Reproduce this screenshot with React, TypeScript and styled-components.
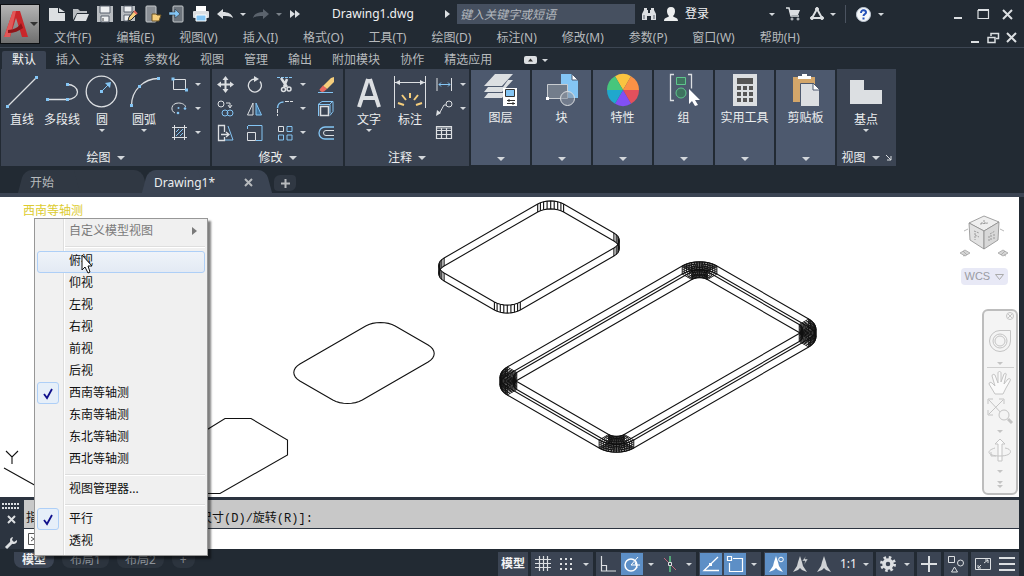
import React from "react";
import styled, { createGlobalStyle, css } from "styled-components";

const LIGHT = "#dcdfe2";
const BLUE = "#84c5f4";
const YELLOW = "#f5ce7c";

const GlobalStyle = createGlobalStyle`
  * { box-sizing: border-box; }
  body {
    margin: 0;
    background: #222a33;
    color: ${LIGHT};
    font: 12px/18px "Noto Sans", "Noto Sans CJK SC", sans-serif;
    overflow: hidden;
  }
  button, input { font: inherit; color: inherit; }
  button { border: 0; padding: 0; background: none; white-space: nowrap; }
  svg { display: block; flex: none; overflow: visible; }
`;

/* ---------- shared parts ---------- */

const Shell = styled.div`
  display: flex;
  flex-direction: column;
  min-height: 100vh;
`;

const Spacer = styled.div`
  flex: 1;
`;

const Caret = styled.span<{ $size?: number; $color?: string }>`
  flex: none;
  width: 0;
  height: 0;
  border: ${(p) => p.$size ?? 3}px solid transparent;
  border-bottom-width: 0;
  border-top-color: ${(p) => p.$color ?? "#d3d7db"};
`;

const IconButton = styled.button<{ $w?: number }>`
  display: flex;
  flex: none;
  align-items: center;
  justify-content: center;
  width: ${(p) => p.$w ?? 24}px;
  height: 24px;
`;

type DrawProps = { w: number; h?: number; children: React.ReactNode };
const Draw = ({ w, h = w, children }: DrawProps) => (
  <svg width={w} height={h} viewBox={`0 0 ${w} ${h}`} fill="none" stroke={LIGHT} aria-hidden="true">
    {children}
  </svg>
);

const Grip = ({ x, y }: { x: number; y: number }) => (
  <rect x={x - 1.5} y={y - 1.5} width="3" height="3" fill={BLUE} stroke="none" />
);

/* ---------- header ---------- */

const Header = styled.header`
  display: flex;
  height: 48px;
  border-bottom: 1px solid #3d4653;
`;

const AppButton = styled.button`
  display: flex;
  align-items: center;
  align-self: flex-start;
  width: 40px;
  height: 40px;
  margin-top: 4px;
  padding-left: 3px;
  gap: 2px;
  background: linear-gradient(#b4b4b4, #6f6f6f);
  border: 1px solid #0d1013;
`;

const HeaderRows = styled.div`
  flex: 1;
  display: flex;
  flex-direction: column;
`;

const TitleRow = styled.div`
  display: flex;
  align-items: center;
  height: 28px;
  padding: 0 5px;
`;

const FileName = styled.span`
  width: 84px;
  margin: 0 25px 0 27px;
  color: #f0f1f2;
`;

const Search = styled.input`
  width: 178px;
  height: 20px;
  margin-left: 4px;
  padding: 0 3px;
  border: 0;
  background: #465060;
  font-style: italic;
  &::placeholder { color: #b3b8be; opacity: 1; }
`;

const SignIn = styled.button`
  display: flex;
  align-items: center;
  gap: 6px;
  margin-right: 56px;
  color: #f0f1f2;
`;

const Rule = styled.span`
  width: 1px;
  height: 18px;
  margin: 0 5px 0 6px;
  background: #4b5360;
`;

const MenuRow = styled.nav`
  display: flex;
  align-items: center;
  height: 19px;
  padding: 0 4px 0 14px;
  gap: 25px;
  color: #b7babd;
`;

const WindowButtons = styled.div`
  display: flex;
`;

/* ---------- ribbon ---------- */

const RibbonTabs = styled.div`
  display: flex;
  align-items: center;
  height: 21px;
  padding: 3px 0 0 2px;
`;

const RibbonTab = styled.button<{ $active?: boolean }>`
  height: 18px;
  padding: 0 10px;
  color: #b7babd;
  ${(p) => p.$active && css`
    background: #3b4453;
    border-radius: 2px 2px 0 0;
    color: #f3f4f5;
  `}
`;

const Minimise = styled.button`
  display: flex;
  align-items: center;
  gap: 5px;
  margin-left: 22px;
`;

const Ribbon = styled.section`
  display: flex;
  gap: 2px;
  height: 97px;
  padding-left: 1px;
`;

const Panel = styled.div<{ $w: number }>`
  display: flex;
  flex-direction: column;
  flex: none;
  width: ${(p) => p.$w}px;
  background: #3b4453;
`;

const PanelBody = styled.div<{ $pad?: number }>`
  display: flex;
  flex: 1;
  padding: 3px 0 0 ${(p) => p.$pad ?? 0}px;
`;

const PanelTitle = styled.button`
  display: flex;
  align-items: center;
  justify-content: center;
  gap: 6px;
  height: 16px;
  color: #eceeef;
`;

const BigTool = styled.button<{ $w?: number }>`
  display: flex;
  flex-direction: column;
  align-items: center;
  align-self: flex-start;
  width: ${(p) => p.$w ?? 40}px;
  padding-top: 3px;
  color: #eceeef;
`;

const SmallTools = styled.div<{ $cols: string }>`
  display: grid;
  grid-template-columns: ${(p) => p.$cols};
  grid-auto-rows: 24px;
  align-content: start;
`;

const SmallTool = styled.button`
  display: flex;
  align-items: center;
  justify-content: flex-start;
  gap: 7px;
  padding-left: 5px;
`;

const FoldedPanel = styled.button`
  display: flex;
  flex-direction: column;
  align-items: center;
  flex: none;
  width: 59px;
  height: 95px;
  margin-top: 1px;
  padding: 4px 0;
  background: #4d596e;
  color: #eceeef;
  span:first-of-type { margin-top: 3px; flex: 1; }
`;

/* ---------- document tabs ---------- */

const DocTabs = styled.div`
  display: flex;
  align-items: flex-end;
  height: 31px;
  padding-left: 21px;
  border-bottom: 4px solid #3b4453;
`;

const slant = (color: string) => css`
  &::before, &::after {
    content: "";
    position: absolute;
    z-index: -1;
    inset: 0 50% 0 0;
    background: ${color};
    border-radius: 8px 0 0 0;
    transform: skewX(-15deg);
  }
  &::after {
    inset: 0 0 0 45%;
    border-radius: 0 8px 0 0;
    transform: skewX(15deg);
  }
`;

const DocTab = styled.div<{ $active?: boolean }>`
  position: relative;
  z-index: ${(p) => (p.$active ? 1 : 0)};
  display: flex;
  align-items: center;
  justify-content: space-between;
  width: 124px;
  height: 23px;
  padding: 2px 16px 0 9px;
  color: ${(p) => (p.$active ? "#eceeef" : "#b7babd")};
  ${(p) => slant(p.$active ? "#3b4453" : "#303843")}
`;

const NewTab = styled.button`
  display: flex;
  align-items: center;
  justify-content: center;
  width: 22px;
  height: 16px;
  margin: 0 0 2px 5px;
  background: #303843;
  border-radius: 6px 4px 6px 4px;
`;

/* ---------- model space ---------- */

const Canvas = styled.main`
  position: relative;
  flex: 1;
  min-height: 300px;
  margin-right: 5px;
  background: #fff;
  color: #000;
`;

const Model = styled.svg`
  position: absolute;
  inset: 0;
  width: 100%;
  height: 100%;
`;

const ViewLabel = styled.button`
  position: absolute;
  left: 23px;
  top: 5px;
  color: #dccb2e;
`;

const CubeBox = styled.div`
  position: absolute;
  top: 17px;
  right: 11px;
  display: flex;
  flex-direction: column;
  align-items: center;
  gap: 8px;
`;

const Wcs = styled.button`
  display: flex;
  align-items: center;
  justify-content: space-between;
  width: 47px;
  height: 17px;
  padding: 0 4px;
  border-radius: 4px;
  background: #e8e9f6;
  color: #9a9ba3;
  font: 11px/17px "Liberation Sans", "Noto Sans CJK SC", sans-serif;
`;

const NavBar = styled.div`
  position: absolute;
  top: 112px;
  right: 1px;
  display: flex;
  flex-direction: column;
  align-items: center;
  width: 36px;
  height: 186px;
  background: #f4f4f4;
  border: 2px solid #bdbdbd;
  border-radius: 6px;
`;

const NavTool = styled.button<{ $h: number }>`
  display: flex;
  align-items: center;
  justify-content: center;
  width: 32px;
  height: ${(p) => p.$h}px;
`;

const NavRule = styled.div`
  width: 27px;
  height: 1px;
  background: #cfcfcf;
`;

/* ---------- context menu ---------- */

const ViewMenu = styled.div`
  position: absolute;
  z-index: 5;
  left: 34px;
  top: 21px;
  width: 174px;
  padding: 2px;
  border: 1px solid #979797;
  background: linear-gradient(90deg, #f1f1f1 28px, #dedede 28px, #dedede 29px, #fff 29px, #fff 30px, #f0f0f0 30px);
  box-shadow: 3px 3px 2px rgba(0, 0, 0, 0.5);
`;

const MenuItem = styled.button<{ $hot?: boolean; $dim?: boolean }>`
  display: grid;
  grid-template-columns: 31px 1fr 12px;
  align-items: center;
  align-content: center;
  width: 100%;
  height: 22px;
  padding-bottom: 2px;
  text-align: left;
  border: 1px solid transparent;
  border-radius: 3px;
  color: ${(p) => (p.$dim ? "#7a7a7a" : "#111")};
  ${(p) => p.$hot && css`
    border-color: #aecff7;
    background: linear-gradient(#eff3f9, #e3eaf4);
  `}
`;

const Tick = styled.span<{ $on?: boolean }>`
  display: flex;
  align-items: center;
  justify-content: center;
  width: 22px;
  height: 22px;
  margin-left: -1px;
  ${(p) => p.$on && css`
    border: 1px solid #aecff7;
    border-radius: 3px;
    background: #e6eff9;
  `}
`;

const MenuRule = styled.div`
  height: 8px;
  margin-left: 28px;
  background: linear-gradient(transparent 3px, #dedede 3px, #dedede 4px, #fff 4px, #fff 5px, transparent 5px);
`;

const Pointer = styled.svg`
  position: absolute;
  z-index: 6;
  left: 81px;
  top: 57px;
`;

/* ---------- command line ---------- */

const Command = styled.section`
  display: flex;
  height: 52px;
  margin-right: 5px;
  padding-top: 3px;
  background: #2c3440;
  color: #111;
`;

const CommandGrip = styled.div`
  display: flex;
  flex-direction: column;
  align-items: center;
  justify-content: space-between;
  width: 24px;
  padding: 3px 2px 0 0;
  button:first-of-type { margin-bottom: 8px; }
`;

const CommandLines = styled.div`
  flex: 1;
  display: flex;
  flex-direction: column;
  gap: 1px;
  font-family: "Liberation Mono", "Noto Sans CJK SC", monospace;
`;

const History = styled.div`
  display: flex;
  align-items: flex-end;
  gap: 18px;
  height: 28px;
  padding: 0 2px;
  background: #c8c8c8;
`;

const Prompt = styled.label`
  display: flex;
  align-items: center;
  height: 20px;
  padding-left: 4px;
  background: #fff;
`;

const PromptInput = styled.input`
  flex: 1;
  border: 0;
  outline: 0;
  background: none;
`;

/* ---------- status bar ---------- */

const Status = styled.footer`
  display: flex;
  gap: 3px;
  height: 27px;
  padding: 3px 5px 0 14px;
`;

const LayoutTab = styled.button<{ $active?: boolean }>`
  height: 16px;
  padding: 0 8px;
  margin-right: 5px;
  color: ${(p) => (p.$active ? "#eceeef" : "#8d939a")};
  font-weight: ${(p) => (p.$active ? 700 : 400)};
  line-height: 14px;
  background: ${(p) => (p.$active ? "#3b4453" : "#2c343e")};
  border-radius: 0 0 8px 8px;
`;

const Group = styled.div`
  display: flex;
  align-items: center;
  background: #3b4453;
`;

const StatusTool = styled.button<{ $on?: boolean }>`
  display: flex;
  align-items: center;
  justify-content: center;
  width: 22px;
  height: 22px;
  margin: 0 1px;
  background: ${(p) => (p.$on ? "#5d8fc6" : "transparent")};
`;

const StatusCaret = styled.button`
  display: flex;
  align-items: center;
  justify-content: center;
  width: 14px;
  height: 22px;
`;

const SpaceButton = styled.button`
  width: 30px;
  font-weight: 700;
  color: #f3f4f5;
`;

const ScaleButton = styled.button`
  display: flex;
  align-items: center;
  justify-content: space-between;
  width: 37px;
  padding: 0 4px;
  color: #f3f4f5;
`;

/* ---------- geometry of the isometric drawing ---------- */

type Pt = [number, number];
type Ring = { cx: number; cy: number; p: number; q: number; r: number };
const CX = Math.cos(Math.PI / 6);

const iso = (ring: Ring, u: number, v: number): Pt => [
  ring.cx + CX * (u + v),
  ring.cy + 0.5 * (v - u),
];

/* Points of one rounded corner; corners are 0 right, 1 bottom, 2 left, 3 top. */
const corner = (ring: Ring, k: number, steps: number, r = ring.r): Pt[] => {
  const su = k === 0 || k === 3 ? 1 : -1;
  const sv = k === 0 || k === 1 ? 1 : -1;
  return Array.from({ length: steps + 1 }, (_, i) => {
    const a = (k * Math.PI) / 2 + (i / steps) * (Math.PI / 2);
    return iso(ring, su * ring.p + r * Math.cos(a), sv * ring.q + r * Math.sin(a));
  });
};

const pathOf = (pts: Pt[], dy = 0, close = false) =>
  "M" + pts.map(([x, y]) => `${x.toFixed(1)} ${(y + dy).toFixed(1)}`).join("L") + (close ? "Z" : "");

const outline = (ring: Ring, dy = 0, r = ring.r) =>
  pathOf([0, 1, 2, 3].flatMap((k) => corner(ring, k, 8, r)), dy, true);

const plate: Ring = { cx: 364, cy: 166, p: 38, q: 19, r: 17 };
const band: Ring = { cx: 529, cy: 56, p: 54, q: 29, r: 15 };
const tube: Ring = { cx: 658, cy: 160, p: 101, q: 53, r: 20 };

const bandRibs = [0, 1, 2, 3]
  .flatMap((k) => corner(band, k, 8))
  .map(([x, y]) => `M${x.toFixed(1)} ${y.toFixed(1)}v8`)
  .join("");

const section: Pt[] = [
  [20, -4], [20, -2], [20, 0], [20, 2], [20, 4], [17, 4], [14, 4], [12, 4],
  [9, 4], [9, 1], [9, -2], [9, -4], [12, -4], [14, -4], [17, -4],
];

const tubeMesh = [0, 1, 2, 3]
  .flatMap((k) => {
    const arcs = section.map(([r, dy]) => corner(tube, k, 14, r).map(([x, y]): Pt => [x, y + dy]));
    const hoops = Array.from({ length: 15 }, (_, i) => pathOf(arcs.map((a) => a[i]), 0, true));
    return [...arcs.map((a) => pathOf(a)), ...hoops];
  })
  .join("");

const ModelDrawing = () => (
  <Model fill="none" stroke="#111" strokeWidth="1.1" aria-label="模型空间">
    <path d="M200 237L225 221.500H251L287.500 243V258L220 296.500H200" />
    <path d={outline(plate)} />
    <path d={outline(band)} />
    <path d={outline(band, 8)} />
    <path d={bandRibs} />
    <path d={outline(tube, -4)} />
    <path d={outline(tube, 4)} />
    <path d={outline(tube, -4, 9)} />
    <path d={outline(tube, 4, 9)} />
    <path d={tubeMesh} strokeWidth="0.9" />
    <path d="M6 254l6 6 6-6M12 260v7M4 271l34 19" />
  </Model>
);

/* ---------- icon drawings ---------- */

const quick: [string, React.ReactNode][] = [
  ["新建", <Draw w={18} key="n"><path d="M1 3h9v5h7v8H1zM11 3l6 4h-6z" fill={LIGHT} stroke="none" /></Draw>],
  ["打开", <Draw w={18} key="o"><path d="M1 15V4h5l2 2h7v2H5z" fill="#b9bdc1" stroke="none" /><path d="M5 9h12l-3 7H2z" fill={LIGHT} stroke="none" /></Draw>],
  ["保存", <Draw w={18} key="s"><path d="M1 1h16v16H1z" fill="#b9bdc1" stroke="none" /><path d="M4 1h10v7H4zM5 11h8v6H5z" fill="#eef0f1" stroke="#59616c" /><path d="M7 13v3" stroke="#444" /></Draw>],
  ["另存为", <Draw w={18} key="a"><path d="M1 1h14v15H1z" fill="#b9bdc1" stroke="none" /><path d="M4 1h8v6H4zM4 10h6v6H4z" fill="#eef0f1" stroke="#59616c" /><path d="M8 16l1-4 5-6 3 3-6 6z" fill={YELLOW} stroke="#222a33" /><path d="M14 6l3 3" stroke="#e46a5e" strokeWidth="2" /></Draw>],
  ["从移动设备打开", <Draw w={18} key="m"><rect x="2" y="1" width="10" height="16" rx="1" fill="#8a8f95" stroke="#c6cacd" /><path d="M8 16V9h4l1 1h4l-2 6z" fill={YELLOW} stroke="#6d5526" /></Draw>],
  ["保存到移动设备", <Draw w={18} key="t"><rect x="5" y="1" width="10" height="16" rx="1" fill="#6d747c" stroke="#c6cacd" /><path d="M1 7h6V4l5 5-5 4v-3H1z" fill={BLUE} stroke="#222a33" strokeWidth="0.500" /></Draw>],
  ["打印", <Draw w={18} key="p"><path d="M4 1h10v5H4z" fill="#fff" stroke="none" /><rect x="1" y="6" width="16" height="7" rx="1" fill={LIGHT} stroke="none" /><path d="M4 10h10v6H4z" fill={BLUE} stroke="#fff" /></Draw>],
];

const Arrow = ({ redo }: { redo?: boolean }) => (
  <Draw w={16}>
    <path
      d={redo ? "M16 8l-6-5v3C5 6 1 8 0 12c3-2 6-2 10-2v3z" : "M0 8l6-5v3c5 0 9 2 10 6-3-2-6-2-10-2v3z"}
      fill={redo ? "#5b636d" : LIGHT}
      stroke="none"
    />
  </Draw>
);

const Close = ({ s = 12, c = LIGHT }: { s?: number; c?: string }) => (
  <Draw w={s}><path d={`M1 1L${s - 1} ${s - 1}M${s - 1} 1L1 ${s - 1}`} stroke={c} strokeWidth="2" /></Draw>
);

const drawTools: [string, boolean, number, React.ReactNode][] = [
  ["直线", false, 40, <><path d="M3.500 31.500l29-29" strokeWidth="1.300" /><Grip x={3.5} y={31.5} /><Grip x={32.5} y={2.5} /></>],
  ["多段线", false, 40, <><path d="M3.500 24.500h20a10 7.500 0 0 0 0-15" strokeWidth="1.300" /><Grip x={3.5} y={24.5} /><Grip x={23.5} y={24.5} /><Grip x={23.5} y={9.5} /></>],
  ["圆", true, 40, <><circle cx="17.500" cy="16.500" r="15.300" strokeWidth="1.300" /><path d="M17.500 16.500l8-8" stroke={BLUE} /><path d="M27 7l-1 6-5-5z" fill={BLUE} stroke="none" /><Grip x={17.5} y={16.5} /></>],
  ["圆弧", true, 44, <><path d="M5.500 30.500a27 27 0 0 1 27-27" strokeWidth="1.300" /><Grip x={5.5} y={30.5} /><Grip x={13.5} y={11.5} /><Grip x={32.5} y={3.5} /></>],
];

const drawSmall: [string, React.ReactNode][] = [
  ["矩形", <><path d="M2.500 3.500h12v10h-12z" /><Grip x={2} y={3} /><Grip x={15.5} y={14} /></>],
  ["椭圆", <><path d="M4 13C-1 11 0 3 7.500 3c4 0 7 2 7 4" /><g fill={BLUE} stroke="none"><circle cx="7.500" cy="8" r="1" /><circle cx="14" cy="8.500" r="1.300" /><circle cx="7" cy="13" r="1.300" /></g></>],
  ["图案填充", <><path d="M3.500 1v15M13.500 1v15M1 3.500h15M1 13.500h15" /><path d="M5 8l3-3M5 12l7-7M9 12l3-3" stroke={BLUE} /></>],
];

const modify: [string, boolean, React.ReactNode][] = [
  ["移动", false, <><path d="M8.500 3v11M3 8.500h11" strokeWidth="2" /><path d="M8.500 0l3 4h-6zM8.500 17l3-4h-6zM0 8.500l4-3v6zM17 8.500l-4-3v6z" fill={LIGHT} stroke="none" /></>],
  ["旋转", false, <><path d="M9 3a6.500 6.500 0 1 0 5 2.500" strokeWidth="1.300" /><path d="M8 0l5 3-5 3z" fill={LIGHT} stroke="none" /></>],
  ["修剪", true, <><path d="M1 1.500h16" stroke={BLUE} strokeDasharray="3 1" /><path d="M5 2l6 9M11 3l-3 8" strokeWidth="2.500" /><circle cx="7.500" cy="13.500" r="2" strokeWidth="1.500" /><circle cx="13" cy="13" r="2" strokeWidth="1.500" /></>],
  ["删除", false, <><path d="M1 16.500h15" stroke={BLUE} /><path d="M6 10l8-8 3-1v5l-7 7z" fill={YELLOW} stroke="none" /><path d="M2.500 13.500l3.500-4 4 3.500-3 2.500c-2 1-4 0-4.500-2z" fill="#e9695f" stroke="none" /></>],
  ["复制", false, <><circle cx="4" cy="4" r="3" /><path d="M9 3h4v4M11 5l2 3 2-3" /><g stroke={BLUE}><circle cx="8" cy="13" r="3" /><circle cx="13" cy="13" r="3" /></g></>],
  ["镜像", false, <><path d="M7 3v12H1.500z" /><path d="M10 3v12h5.500z" fill="#3f729d" stroke={BLUE} /></>],
  ["圆角", true, <><path d="M1.500 8c0-4 3-6 6-6" stroke={BLUE} strokeWidth="1.500" /><path d="M9 1.500h8M1.500 9v7" strokeDasharray="4 1" /></>],
  ["分解", false, <><path d="M3.500 6.500h8v9h-8z" strokeWidth="1.500" /><path d="M1 4.500l4-3h11v10l-3 4M1 4.500h12v9M13 4l3-3M1.500 4v12" stroke={BLUE} /></>],
  ["拉伸", false, <><path d="M7.500 8V1.500h-6v15h6V13M4 10.500h8M9 8l3 2.500-3 2.500" strokeWidth="1.300" /><path d="M11 2l5 14H8" stroke={BLUE} /></>],
  ["缩放", false, <><path d="M2 1.500h14v15h-6M1.500 5v-3" stroke={BLUE} /><path d="M1.500 8.500h8v8h-8z" /></>],
  ["阵列", true, <><path d="M2.500 2.500h5v5h-5z" /><path d="M11 2.500h5v5h-5zM2.500 11h5v5h-5zM11 11h5v5h-5z" stroke={BLUE} /></>],
  ["偏移", false, <><path d="M17 3H8a6 6 0 0 0 0 12h9" stroke={BLUE} strokeWidth="1.300" /><path d="M17 6.500H9a2.500 2.500 0 0 0 0 5h8" /></>],
];

const annotateSmall: [string, boolean, React.ReactNode][] = [
  ["线性", true, <><path d="M1 2v13M15.500 2v13" /><path d="M3 8.500h11M5 6.500L3 8.500l2 2M12 6.500l2 2-2 2" stroke={BLUE} /></>],
  ["引线", true, <><circle cx="13" cy="4" r="3" /><path d="M10 5H8L3 14" /><path d="M0 16l1-6 4 3z" fill={LIGHT} stroke="none" /></>],
  ["表格", false, <path d="M.500 2.500h15v12H.500zM.500 6.500h15M.500 10.500h15M5.500 4v10M10.500 4v10M1 4h14" strokeWidth="1.200" />],
];

const wheel = ["#f9c440", "#fb9146", "#e4505c", "#8250f5", "#20a8cd", "#47c67c"];
const slice = (i: number) => {
  const at = (d: number) => {
    const a = ((d - 120) * Math.PI) / 180;
    return `${(16 + 16 * Math.cos(a)).toFixed(2)} ${(16 + 16 * Math.sin(a)).toFixed(2)}`;
  };
  return `M16 16L${at(i * 60)}A16 16 0 0 1 ${at(i * 60 + 60)}Z`;
};

const folded: [string, React.ReactNode][] = [
  ["图层", <><g fill={LIGHT} stroke="none"><path d="M10 0h18L17 12H-1zM3 13h15l5-7h5L17 18H-1zM3 19h15l2-2v3l-3 4H-1z" /></g><rect x="18.500" y="14.500" width="13" height="17" fill="#fff" stroke="#fff" /><path d="M20.500 15.500h9v7h-9z" fill={BLUE} stroke="#333" /><path d="M22 26.500h8M22 29.500h8M24 25v3M28 28v3" stroke="#333" /></>],
  ["块", <><path d="M15 0h11l6 6v18H15z" fill={BLUE} stroke="none" /><path d="M26 0v6h6z" fill="#fff" stroke="#4d596e" /><path d="M1.500 10.500h20v14h-20z" fill="#737d8b" stroke="#c8ccd0" /><circle cx="21.500" cy="24.500" r="7" fill="#8a93a099" /><path d="M0 23h3v3H0z" fill="#fff" stroke="none" /></>],
  ["特性", wheel.map((c, i) => <path key={c} d={slice(i)} fill={c} stroke="none" />)],
  ["组", <><path d="M6 .500H2.500v26H6M20 .500h3.500v14" strokeWidth="1.300" /><g fill="#3f735f" stroke="#5fc68d"><path d="M8.500 3.500h9v7h-9z" /><circle cx="13" cy="19" r="5" /></g><path d="M21 15l11 11h-5l3 5-3 1-3-5-3 3z" fill="#fff" stroke="none" /></>],
  ["实用工具", <><path d="M4 0h24v32H4z" fill={LIGHT} stroke="none" /><path d="M8 4h16v6H8z" fill="#555" stroke="none" /><path d="M8 14h16M8 20h16M8 26h16" stroke="#555" strokeWidth="4" strokeDasharray="4 2" /></>],
  ["剪贴板", <><path d="M3 3h22v25H3z" fill="#d3a66a" stroke="none" /><path d="M8 2h4V0h5v2h4v3H8z" fill="#fff" stroke="none" /><path d="M10.500 9.500h13l6 6v17h-19z" fill={LIGHT} stroke="#4d596e" /><path d="M23 9v7h7z" fill="#fff" stroke="#4d596e" /></>],
];

const Compass = ({ on, flash }: { on?: boolean; flash?: boolean }) => (
  <Draw w={16}>
    <path d="M8 0l2 6 1 4 4 6-5-2-2-2-2 2-5 2 4-6 1-4z" fill={on ? "#fff" : "#cfd2d5"} stroke="none" />
    {on && <circle cx="13" cy="3.500" r="2.300" stroke="#fff" />}
    {flash && <path d="M14 0l-4 5h3l-1 4 4-6h-3z" fill="#cfd2d5" stroke="#3b4453" strokeWidth="0.500" />}
  </Draw>
);

/* ---------- page data ---------- */

const menus = ["文件(F)", "编辑(E)", "视图(V)", "插入(I)", "格式(O)", "工具(T)", "绘图(D)", "标注(N)", "修改(M)", "参数(P)", "窗口(W)", "帮助(H)"];
const tabs = ["默认", "插入", "注释", "参数化", "视图", "管理", "输出", "附加模块", "协作", "精选应用"];
const views: (string | null)[] = [
  null, "俯视", "仰视", "左视", "右视", "前视", "后视", "西南等轴测", "东南等轴测", "东北等轴测", "西北等轴测",
  null, "视图管理器...", null, "平行", "透视",
];
const ticked = ["西南等轴测", "平行"];
const GREY = "#c4c4c4";

const ViewMenuList = () => (
  <ViewMenu role="menu">
    <MenuItem role="menuitem" $dim>
      <Tick />自定义模型视图
      <Draw w={6} h={8}><path d="M0 0l5 4-5 4z" fill="#7a7a7a" stroke="none" /></Draw>
    </MenuItem>
    {views.map((name, i) =>
      name === null ? (
        <MenuRule key={i} />
      ) : (
        <MenuItem key={i} role="menuitem" $hot={name === "俯视"}>
          <Tick $on={ticked.includes(name)}>
            {ticked.includes(name) && (
              <Draw w={10} h={11}><path d="M1 6l3 4 5-9" stroke="#10108c" strokeWidth="1.800" /></Draw>
            )}
          </Tick>
          {name}
        </MenuItem>
      ),
    )}
  </ViewMenu>
);

const App = () => (
  <Shell>
    <GlobalStyle />
    <Header>
      <AppButton aria-label="应用程序菜单">
        <Draw w={24} h={28}>
          <g stroke="none">
            <path d="M9 1h7l8 26h-6L12 8 6 27H0z" fill="#c9272b" />
            <path d="M9 1h3l-6 26H0z" fill="#e25757" />
            <path d="M4 20c6 0 11-3 13-7l2 5c-4 3-9 5-15 5z" fill="#8f1519" />
          </g>
        </Draw>
        <Caret $size={4} $color="#333" />
      </AppButton>
      <HeaderRows>
        <TitleRow>
          {quick.map(([name, icon]) => <IconButton key={name} aria-label={name}>{icon}</IconButton>)}
          <IconButton aria-label="放弃"><Arrow /></IconButton>
          <IconButton $w={12} aria-label="放弃列表"><Caret /></IconButton>
          <IconButton aria-label="重做"><Arrow redo /></IconButton>
          <IconButton $w={12} aria-label="重做列表"><Caret $color="#7b828a" /></IconButton>
          <IconButton $w={20} aria-label="更多">
            <Draw w={10}><path d="M0 1l5 4-5 4zM5 1l5 4-5 4z" fill={LIGHT} stroke="none" /></Draw>
          </IconButton>
          <FileName>Drawing1.dwg</FileName>
          <IconButton $w={12} aria-label="展开搜索">
            <Draw w={5} h={8}><path d="M0 0l5 4-5 4z" fill={LIGHT} stroke="none" /></Draw>
          </IconButton>
          <Search aria-label="搜索" placeholder="键入关键字或短语" />
          <IconButton $w={28} aria-label="查找">
            <Draw w={14}><path d="M2 1h3v2h1v3h2V3h1V1h3v2l2 4v6H9V9H5v4H0V7l2-4z" fill={LIGHT} stroke="none" /><path d="M2 8v4M12 8v4" stroke="#59616c" /></Draw>
          </IconButton>
          <SignIn>
            <Draw w={16}><path d="M8 1c6 0 4 8 2 9 1 2 5 1 5 5H1c0-4 4-3 5-5C4 9 2 1 8 1z" fill="#eceeef" stroke="none" /></Draw>
            登录
          </SignIn>
          <IconButton $w={14} aria-label="登录选项"><Caret /></IconButton>
          <IconButton $w={28} aria-label="应用商店">
            <Draw w={14}><path d="M0 1h3l2 8h8" strokeWidth="1.500" /><path d="M3 3h11l-2 5H5z" fill={LIGHT} stroke="none" /><circle cx="6" cy="12" r="1" /><circle cx="12" cy="12" r="1" /></Draw>
          </IconButton>
          <IconButton $w={20} aria-label="联机">
            <Draw w={14}><path d="M7 2L2 11h10z" strokeWidth="2" /><g fill={LIGHT}><circle cx="7" cy="2" r="1.500" /><circle cx="2" cy="11" r="1.500" /><circle cx="12" cy="11" r="1.500" /></g></Draw>
          </IconButton>
          <IconButton $w={12} aria-label="联机选项"><Caret /></IconButton>
          <Rule />
          <IconButton aria-label="帮助">
            <Draw w={15}><circle cx="7.500" cy="7.500" r="7" fill="#f5f7fa" stroke="#c3ccd8" /><path d="M5 6c0-4 5-3 5-.500C10 7 7.500 7 7.500 9M7.500 10.500v2" stroke="#2450b8" strokeWidth="2" /></Draw>
          </IconButton>
          <IconButton $w={12} aria-label="帮助选项"><Caret /></IconButton>
          <Spacer />
          <WindowButtons>
            <IconButton $w={26} aria-label="最小化"><Draw w={10}><path d="M1 9h8" strokeWidth="2" /></Draw></IconButton>
            <IconButton $w={24} aria-label="最大化"><Draw w={12}><path d="M1 2.500h10.500v8H1z" strokeWidth="1.200" /><path d="M1 2h11" strokeWidth="2" /></Draw></IconButton>
            <IconButton $w={24} aria-label="关闭"><Close s={11} /></IconButton>
          </WindowButtons>
        </TitleRow>
        <MenuRow>
          {menus.map((m) => <button key={m}>{m}</button>)}
          <Spacer />
          <WindowButtons>
            <IconButton $w={18} aria-label="最小化图形"><Draw w={8}><path d="M0 8h8" strokeWidth="2" /></Draw></IconButton>
            <IconButton $w={18} aria-label="还原图形"><Draw w={12}><path d="M1 5.500h7v5H1zM4 4V1.500h7.500v5H9" strokeWidth="1.500" /></Draw></IconButton>
            <IconButton $w={18} aria-label="关闭图形"><Close s={11} /></IconButton>
          </WindowButtons>
        </MenuRow>
      </HeaderRows>
    </Header>

    <RibbonTabs>
      {tabs.map((t, i) => <RibbonTab key={t} $active={i === 0}>{t}</RibbonTab>)}
      <Minimise aria-label="最小化功能区">
        <Draw w={13} h={8}><rect width="13" height="8" rx="2" fill={LIGHT} stroke="none" /><path d="M4 5.500l2.500-3 2.500 3z" fill="#333" stroke="none" /></Draw>
        <Caret />
      </Minimise>
    </RibbonTabs>

    <Ribbon>
      <Panel $w={209}>
        <PanelBody $pad={1}>
          {drawTools.map(([name, more, w, icon]) => (
            <BigTool key={name} $w={w}>
              <Draw w={36}>{icon}</Draw>
              {name}
              {more && <Caret />}
            </BigTool>
          ))}
          <SmallTools $cols="40px">
            {drawSmall.map(([name, icon]) => (
              <SmallTool key={name} aria-label={name}><Draw w={17}>{icon}</Draw><Caret /></SmallTool>
            ))}
          </SmallTools>
        </PanelBody>
        <PanelTitle>绘图<Caret $size={4} /></PanelTitle>
      </Panel>

      <Panel $w={131}>
        <PanelBody>
          <SmallTools $cols="29px 30px 41px 28px">
            {modify.map(([name, more, icon]) => (
              <SmallTool key={name} aria-label={name}><Draw w={17}>{icon}</Draw>{more && <Caret />}</SmallTool>
            ))}
          </SmallTools>
        </PanelBody>
        <PanelTitle>修改<Caret $size={4} /></PanelTitle>
      </Panel>

      <Panel $w={124}>
        <PanelBody $pad={4}>
          <BigTool>
            <Draw w={36}><path d="M17 4l-9 28M19 4l9 28M11 23h14" strokeWidth="4" /></Draw>
            文字<Caret />
          </BigTool>
          <BigTool $w={42}>
            <Draw w={36}>
              <path d="M2.500 1v32M33.500 1v32M3 7.500h30" />
              <path d="M3 7.500l5-2.500v5zM33 7.500l-5-2.500v5z" fill={LIGHT} stroke="none" />
              <path d="M18 18v5M10 20l4 5M26 20l-4 5M6 28l6 2M30 28l-6 2" stroke={YELLOW} strokeWidth="2" />
            </Draw>
            标注
          </BigTool>
          <SmallTools $cols="34px">
            {annotateSmall.map(([name, more, icon]) => (
              <SmallTool key={name} aria-label={name}><Draw w={17}>{icon}</Draw>{more && <Caret />}</SmallTool>
            ))}
          </SmallTools>
        </PanelBody>
        <PanelTitle>注释<Caret $size={4} /></PanelTitle>
      </Panel>

      {folded.map(([name, icon]) => (
        <FoldedPanel key={name}>
          <Draw w={32}>{icon}</Draw>
          <span>{name}</span>
          <Caret $size={4} />
        </FoldedPanel>
      ))}

      <Panel $w={59}>
        <PanelBody $pad={7}>
          <BigTool $w={44}>
            <Draw w={36}><path d="M2 5h14v10h18v14H2z" fill={LIGHT} stroke="none" /></Draw>
            基点<Caret />
          </BigTool>
        </PanelBody>
        <PanelTitle>
          视图<Caret $size={4} />
          <Draw w={6}><path d="M0 0l5 5M5 1v4H1" /></Draw>
        </PanelTitle>
      </Panel>
    </Ribbon>

    <DocTabs>
      <DocTab>开始</DocTab>
      <DocTab $active>
        Drawing1*
        <button aria-label="关闭选项卡"><Close s={9} c="#b7babd" /></button>
      </DocTab>
      <NewTab aria-label="新图形"><Draw w={9}><path d="M4.500 0v9M0 4.500h9" strokeWidth="2" stroke="#b7babd" /></Draw></NewTab>
    </DocTabs>

    <Canvas>
      <ModelDrawing />
      <ViewLabel>西南等轴测</ViewLabel>
      <CubeBox>
        <Draw w={48} h={46}>
          <g stroke="#8b8b8b" strokeWidth="0.800">
            <path d="M9 9l15-7 15 6-15 9z" fill="#efefef" />
            <path d="M9 9l15 8v18L10 26z" fill="#e2e2e2" />
            <path d="M39 8l-15 9v18l14-9z" fill="#d8d8d8" />
            <path d="M21 9h5M24 6v3M20 10l8-1" strokeDasharray="2 1" />
            <path d="M14 17l5 2M15 21l4 2M15 19v7M30 20l5-3M29 22v5M31 21v5M34 20v5" strokeDasharray="2 1" />
          </g>
          <g stroke="#a5a5a5" strokeWidth="0.800" fill="#d5d5d5">
            <path d="M0 39l5-3 5 3-5 3zM3 37l4 4M38 39l5-3 5 3-5 3zM41 41l4-4M4 17l4-2M44 17l-4-2M3 42l2-1M46 42l-2-1" />
          </g>
        </Draw>
        <Wcs>WCS<Draw w={9} h={6}><path d="M.500.500h8l-4 5z" stroke="#aaa" /></Draw></Wcs>
      </CubeBox>
      <NavBar>
        <NavTool $h={10} aria-label="关闭导航栏"><svg width="32" height="10" fill="none" stroke={GREY}><circle cx="26" cy="5" r="3.500" /><path d="M24 3l4 4M28 3l-4 4" /></svg></NavTool>
        <NavTool $h={40} aria-label="导航控制盘"><Draw w={22}><g stroke={GREY}><path d="M11 .500h10.500V11A10.500 10.500 0 1 1 11 .500z" /><circle cx="11" cy="11" r="7" /><circle cx="11" cy="11" r="5" /></g></Draw></NavTool>
        <NavTool $h={4} aria-label="控制盘选项"><Caret $color={GREY} /></NavTool>
        <NavTool $h={4} as="div"><NavRule /></NavTool>
        <NavTool $h={28} aria-label="平移">
          <Draw w={24}><path d="M7 23L1 13c0-2 2-2 3-1l3 3L4 5c0-2 2-2 3-1l3 8V2c0-2 3-2 3 0v9l3-8c1-1 3-1 2 1l-2 9 4-5c2-1 3 0 2 2l-4 7-3 6z" fill="#fafafa" stroke={GREY} /></Draw>
        </NavTool>
        <NavTool $h={28} aria-label="范围缩放"><Draw w={24}><g stroke={GREY}><path d="M1 1l14 15M15 1L1 15M0 5V0h5M11 0h5v5M0 11v5h5" /><circle cx="16" cy="16" r="5" fill="#f4f4f4" /><path d="M20 20l4 4" strokeWidth="3" /></g></Draw></NavTool>
        <NavTool $h={12} aria-label="缩放选项"><Caret $color={GREY} /></NavTool>
        <NavTool $h={28} aria-label="动态观察"><Draw w={24}><g stroke={GREY}><path d="M10 22V5H7l5-5 5 5h-3v17z" fill="#fafafa" /><path d="M7 9c-10 3-7 8 5 8 13 0 13-7 5-8M3 13v4h5" /></g></Draw></NavTool>
        <NavTool $h={12} aria-label="动态观察选项"><Caret $color={GREY} /></NavTool>
        <NavTool $h={14} aria-label="自定义导航栏"><Draw w={6} h={8}><path d="M0 1h6L3 4zM0 5h6L3 8z" fill={GREY} stroke="none" /></Draw></NavTool>
      </NavBar>
      <ViewMenuList />
      <Pointer width="12" height="20" viewBox="0 0 12 20" aria-hidden="true">
        <path d="M1 1v15l3-3 3 6 2-1-2-6h4z" fill="#fff" stroke="#111" />
      </Pointer>
    </Canvas>

    <Command>
      <CommandGrip>
        <Draw w={18} h={6}><path d="M0 1h18M0 5h18" strokeWidth="2" strokeDasharray="2 1" /></Draw>
        <button aria-label="关闭命令行"><Close s={9} /></button>
        <button aria-label="自定义命令行"><Draw w={12}><path d="M1 11l6-6" strokeWidth="3" /><path d="M12 3a3.500 3.500 0 1 1-4-3L7 3l2 2z" fill={LIGHT} stroke="none" /></Draw></button>
      </CommandGrip>
      <CommandLines>
        <History><span>指定另一个角点或</span><span>[面积(A)/尺寸(D)/旋转(R)]:</span></History>
        <Prompt>
          <Draw w={14} h={12}><path d="M.500.500h13v11H.500zM3 4l3 2-3 2" stroke="#555" /></Draw>
          <PromptInput aria-label="命令" />
        </Prompt>
      </CommandLines>
    </Command>

    <Status>
      <LayoutTab $active>模型</LayoutTab>
      <LayoutTab>布局1</LayoutTab>
      <LayoutTab>布局2</LayoutTab>
      <LayoutTab>+</LayoutTab>
      <Spacer />
      <Group><SpaceButton>模型</SpaceButton></Group>
      <Group>
        <StatusTool aria-label="栅格"><Draw w={16}><path d="M4.500 0v15M8.500 0v15M12.500 0v15M0 3.500h16M0 7.500h16M0 11.500h16" strokeWidth="1.200" /></Draw></StatusTool>
        <StatusTool aria-label="捕捉"><Draw w={14}><path d="M0 2h14M0 7h14M0 12h14" strokeWidth="2" strokeDasharray="2 3" /></Draw></StatusTool>
        <StatusCaret aria-label="捕捉选项"><Caret /></StatusCaret>
      </Group>
      <Group>
        <StatusTool aria-label="正交"><Draw w={16}><path d="M1.500 0v15H16M1.500 9.500h5V15" strokeWidth="1.200" /></Draw></StatusTool>
        <StatusTool $on aria-label="极轴追踪"><Draw w={16}><circle cx="7" cy="9" r="6" strokeWidth="1.500" stroke="#fff" /><path d="M7 9h9M7 9l7-8M11 6l2 6" stroke="#fff" /></Draw></StatusTool>
        <StatusCaret aria-label="极轴选项"><Caret /></StatusCaret>
        <StatusTool aria-label="等轴测草图"><Draw w={16}><path d="M2 2l12 12" stroke="#c06a7e" /><path d="M8 0v6M8 10v6" stroke="#5cc684" strokeWidth="1.500" /><path d="M6.500 6.500h3v3h-3z" fill="#3b4453" /></Draw></StatusTool>
        <StatusCaret aria-label="等轴测选项"><Caret /></StatusCaret>
      </Group>
      <Group>
        <StatusTool $on aria-label="对象捕捉追踪"><Draw w={16}><path d="M15 1L1 14.500h15" strokeWidth="1.300" stroke="#fff" /><path d="M6 7h3v3H6z" fill="#fff" stroke="none" /></Draw></StatusTool>
        <StatusTool $on aria-label="对象捕捉"><Draw w={16}><path d="M6 2.500h9.500v13H2.500V7M.500.500h4v4h-4z" strokeWidth="1.200" stroke="#fff" /></Draw></StatusTool>
        <StatusCaret aria-label="对象捕捉选项"><Caret /></StatusCaret>
      </Group>
      <Group>
        <StatusTool $on aria-label="显示注释对象"><Compass on /></StatusTool>
        <StatusTool aria-label="自动缩放"><Compass flash /></StatusTool>
        <StatusTool aria-label="注释比例"><Compass /></StatusTool>
        <ScaleButton>1:1<Caret /></ScaleButton>
      </Group>
      <Group>
        <StatusTool aria-label="切换工作空间"><Draw w={16}><circle cx="8" cy="8" r="4" strokeWidth="3.500" /><circle cx="8" cy="8" r="6.500" strokeWidth="3" strokeDasharray="2.500 2.600" /></Draw></StatusTool>
        <StatusCaret aria-label="工作空间选项"><Caret /></StatusCaret>
      </Group>
      <Group><StatusTool aria-label="注释监视器"><Draw w={16}><path d="M8 0v16M0 8h16" strokeWidth="2" /></Draw></StatusTool></Group>
      <Group><StatusTool aria-label="隔离对象"><Draw w={16}><path d="M.500.500h6v6h-6zM6.500 11l3 5h-6z" /><circle cx="12.500" cy="7" r="3" /></Draw></StatusTool></Group>
      <Group>
        <StatusTool aria-label="全屏显示"><Draw w={16} h={12}><path d="M.500.500h15v11H.500zM9 5l4-3M10 2h3v3M6 7l-3 3M3 7v3h3" /></Draw></StatusTool>
        <StatusTool aria-label="自定义"><Draw w={16}><path d="M0 2h16M0 8h16M0 14h16" strokeWidth="2" /></Draw></StatusTool>
      </Group>
    </Status>
  </Shell>
);

export default App;
